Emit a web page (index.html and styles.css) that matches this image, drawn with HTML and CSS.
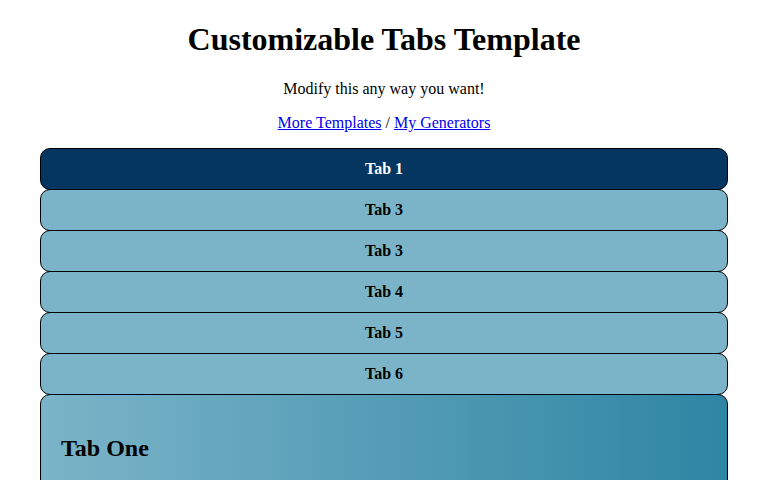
FILE: index.html
```html
<!DOCTYPE html>
<html>
<head>
<meta charset="utf-8">
<link rel="stylesheet" href="styles.css">
</head>
<body>
<h1 class="title">Customizable Tabs Template</h1>
<p class="sub">Modify this any way you want!</p>
<p class="sub"><a href="#">More Templates</a> / <a href="#">My Generators</a></p>
<div class="tabs">
  <div class="tab active">Tab 1</div>
  <div class="tab">Tab 3</div>
  <div class="tab">Tab 3</div>
  <div class="tab">Tab 4</div>
  <div class="tab">Tab 5</div>
  <div class="tab">Tab 6</div>
  <div class="panel">
    <h2 class="panel-title">Tab One</h2>
  </div>
</div>
</body>
</html>
```
FILE: styles.css
```css
html, body {
  margin: 0;
  padding: 0;
  background: #ffffff;
  font-family: "Liberation Serif", "Times New Roman", serif;
  color: #000;
}
.title {
  text-align: center;
  font-size: 32px;
  margin: 21.44px 0;
}
.sub {
  text-align: center;
  font-size: 16px;
  margin: 16px 0;
}
.sub a {
  color: #0000ee;
}
.tabs {
  padding: 0 40px;
}
.tab {
  height: 40px;
  line-height: 40px;
  border: 1px solid #000;
  border-radius: 10px;
  background: #7bb4c8;
  color: #000;
  font-weight: bold;
  font-size: 16px;
  text-align: center;
  margin-bottom: -1px;
}
.tab.active {
  background: #053561;
  color: #fff;
}
.panel {
  border: 1px solid #000;
  border-radius: 10px;
  background: linear-gradient(to right, #7bb4c8, #2e85a4);
  padding: 20px;
  min-height: 200px;
}
.panel-title {
  font-size: 24px;
  margin: 19.92px 0;
}
```
